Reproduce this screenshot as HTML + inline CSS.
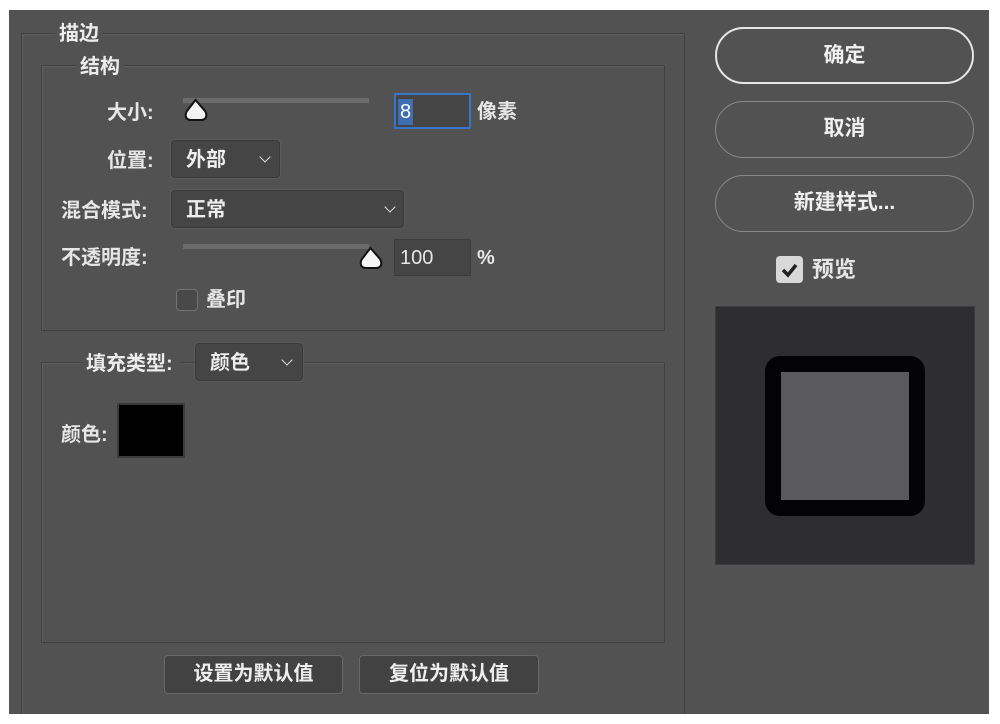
<!DOCTYPE html>
<html><head><meta charset="utf-8"><style>
*{margin:0;padding:0;box-sizing:border-box}
body{width:1000px;height:724px;background:#fff;position:relative;overflow:hidden;font-family:"Liberation Sans","Noto Sans CJK SC",sans-serif;color:#e8e8e8;font-weight:bold}
.dlg{position:absolute;left:9px;top:10px;width:980px;height:704px;background:#535253;overflow:hidden}
.a{position:absolute}
.grp{position:absolute;border:1px solid #404040;box-shadow:1px 1px 0 #5f5e5f inset}
.lbl{position:absolute;font-size:20px;line-height:24px;background:#535253;padding:0 4px;color:#ececec}
.t{position:absolute;font-size:20px;line-height:24px;color:#e6e6e6;white-space:nowrap}
.sel{position:absolute;background:#464546;border:1px solid #3a393a;border-radius:4px;box-shadow:0 0 0 1px #5c5b5c}
.sel span{position:absolute;left:14px;top:7px;font-size:20px;line-height:24px;color:#eee}
.chev{position:absolute;width:8px;height:8px;border-right:1.5px solid #ddd;border-bottom:1.5px solid #ddd;transform:rotate(45deg)}
.inp{position:absolute;background:#464546;border:1px solid #3d3c3d}
.track{position:absolute;height:5px;background:#6c6b6c}
.pill{position:absolute;left:715px;width:259px;height:57px;border-radius:29px;border:1.5px solid #8a898a;font-size:21px;line-height:54px;text-align:center;color:#f0f0f0}
.btn{position:absolute;top:655px;height:39px;background:#434243;border:1px solid #6a696a;border-radius:4px;font-size:20px;line-height:37px;text-align:center;color:#eee}
</style></head><body>
<div class="dlg"><div class="grp" style="left:12px;top:23px;width:664px;height:720px"></div></div>
<div class="lbl" style="left:55px;top:22px">描边</div>
<div class="grp" style="left:41px;top:65px;width:624px;height:266px"></div>
<div class="lbl" style="left:76px;top:55px">结构</div>

<div class="t" style="left:107px;top:101px">大小:</div>
<div class="track" style="left:183px;top:98px;width:186px"></div>
<svg class="a" style="left:183px;top:98px" width="26" height="26" viewBox="0 0 26 26"><path d="M12.5 2 L4 13 Q2 16 3 19 Q4 22 8 22 L18 22 Q22 22 23 19 Q24 16 22 13 Z" fill="#f4f4f4" stroke="#111" stroke-width="2"/></svg>
<div class="inp" style="left:394px;top:93px;width:77px;height:36px;border:2px solid #3b74c4"></div>
<div class="a" style="left:398px;top:99px;width:15px;height:26px;background:#3d6fb0"></div>
<div class="t" style="left:400px;top:100px;color:#fff;font-weight:normal">8</div>
<div class="t" style="left:477px;top:100px">像素</div>

<div class="t" style="left:107px;top:149px">位置:</div>
<div class="sel" style="left:171px;top:140px;width:109px;height:38px"><span>外部</span><i class="chev" style="left:89px;top:12px"></i></div>

<div class="t" style="left:61px;top:199px">混合模式:</div>
<div class="sel" style="left:171px;top:190px;width:233px;height:38px"><span>正常</span><i class="chev" style="left:214px;top:12px"></i></div>

<div class="t" style="left:61px;top:246px">不透明度:</div>
<div class="track" style="left:183px;top:244px;width:186px"></div>
<svg class="a" style="left:358px;top:246px" width="26" height="26" viewBox="0 0 26 26"><path d="M12.5 2 L4 13 Q2 16 3 19 Q4 22 8 22 L18 22 Q22 22 23 19 Q24 16 22 13 Z" fill="#f4f4f4" stroke="#111" stroke-width="2"/></svg>
<div class="inp" style="left:394px;top:239px;width:77px;height:37px"></div>
<div class="t" style="left:400px;top:246px;font-weight:normal">100</div>
<div class="t" style="left:477px;top:246px">%</div>

<div class="a" style="left:176px;top:289px;width:22px;height:22px;border:1.5px solid #747374;border-radius:4px;background:#4a494a"></div>
<div class="t" style="left:206px;top:288px">叠印</div>

<div class="grp" style="left:41px;top:362px;width:624px;height:281px"></div>
<div class="lbl" style="left:82px;top:352px;padding-right:8px">填充类型:</div>
<div class="sel" style="left:195px;top:343px;width:108px;height:38px"><span>颜色</span><i class="chev" style="left:87px;top:12px"></i></div>
<div class="t" style="left:61px;top:423px">颜色:</div>
<div class="a" style="left:117px;top:403px;width:68px;height:55px;background:#000;border:2px solid #3b3a3b"></div>

<div class="btn" style="left:164px;width:179px">设置为默认值</div>
<div class="btn" style="left:359px;width:180px">复位为默认值</div>

<div class="pill" style="top:27px;border:2px solid #e6e6e6">确定</div>
<div class="pill" style="top:101px">取消</div>
<div class="pill" style="top:175px">新建样式...</div>

<div class="a" style="left:776px;top:256px;width:27px;height:27px;background:#d9d8d9;border-radius:4px"></div>
<svg class="a" style="left:776px;top:256px" width="27" height="27"><path d="M7 14 L12 19 L20 9" fill="none" stroke="#222" stroke-width="3.5"/></svg>
<div class="t" style="left:812px;top:258px;font-size:22px">预览</div>

<div class="a" style="left:715px;top:306px;width:260px;height:259px;background:#2e2d2f;border:1px solid #3d3c3d"></div>
<div class="a" style="left:765px;top:356px;width:160px;height:160px;background:#030305;border-radius:15px"></div>
<div class="a" style="left:781px;top:372px;width:128px;height:128px;background:#5a595b"></div>
</body></html>
